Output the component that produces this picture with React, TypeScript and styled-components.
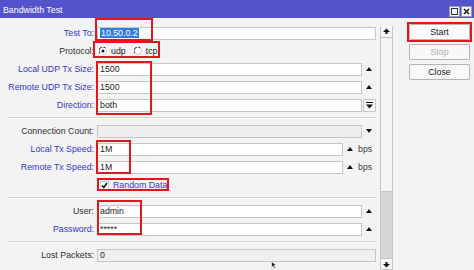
import React from "react";
import styled, { createGlobalStyle } from "styled-components";

const GlobalStyle = createGlobalStyle`
  html, body {
    margin: 0;
    padding: 0;
    background: #f3f3f3;
  }
  body {
    font-family: "Liberation Sans", Arial, sans-serif;
    font-size: 8.8px;
    color: #2a2a2a;
  }
`;

const Window = styled.div`
  position: relative;
  width: 474px;
  height: 270px;
  overflow: hidden;
  display: flex;
  flex-direction: column;
  background: #f3f3f3;
`;

const TitleBar = styled.div`
  height: 18px;
  flex: none;
  display: flex;
  align-items: center;
  justify-content: space-between;
  background: #5353cb;
  color: #fff;
  padding: 0 2px 0 3px;
  box-sizing: border-box;
`;

const Title = styled.span`
  font-size: 8.8px;
  padding-top: 1px;
`;

const TitleButtons = styled.div`
  display: flex;
  gap: 1px;
  align-self: flex-end;
  margin-bottom: 1px;
`;

const TitleButton = styled.div`
  width: 11px;
  height: 11px;
  box-sizing: border-box;
  border: 1px solid #9a9aa8;
  background: #f4f4f4;
  display: flex;
  align-items: center;
  justify-content: center;
`;

const Body = styled.div`
  flex: 1;
  display: flex;
  flex-direction: row;
  min-height: 0;
`;

const FormPane = styled.div`
  width: 380px;
  box-sizing: border-box;
  padding: 6px 4px 0 0;
  display: flex;
  flex-direction: column;
`;

const Row = styled.div`
  height: 18px;
  flex: none;
  display: flex;
  align-items: center;
`;

const Label = styled.div<{ $link?: boolean }>`
  width: 94px;
  padding-right: 3px;
  text-align: right;
  white-space: nowrap;
  color: ${(p) => (p.$link ? "#3535c9" : "#2e2e2e")};
`;

const Field = styled.div<{ $disabled?: boolean }>`
  flex: 1;
  height: 13px;
  box-sizing: border-box;
  border: 1px solid #c6c6c6;
  background: ${(p) => (p.$disabled ? "#efefef" : "#ffffff")};
  display: flex;
  align-items: center;
  padding-left: 2px;
  color: #1c1c1c;
  white-space: nowrap;
`;

const Selected = styled.span`
  background: #2f7fe0;
  color: #fff;
  padding: 0 1px;
  line-height: 10px;
`;

const SpinCell = styled.div`
  width: 14px;
  flex: none;
  display: flex;
  align-items: center;
  justify-content: center;
`;

const UpTri = styled.span`
  width: 0;
  height: 0;
  border-left: 3.5px solid transparent;
  border-right: 3.5px solid transparent;
  border-bottom: 4px solid #111;
`;

const DownTri = styled.span`
  width: 0;
  height: 0;
  border-left: 3.5px solid transparent;
  border-right: 3.5px solid transparent;
  border-top: 4px solid #111;
`;

const DropButton = styled.div`
  width: 13px;
  height: 13px;
  margin-left: 1px;
  box-sizing: border-box;
  border: 1px solid #c6c6c6;
  background: #f7f7f7;
  display: flex;
  align-items: center;
  justify-content: center;
`;

const Unit = styled.span`
  width: 18px;
  flex: none;
  padding-left: 1px;
  color: #3a3a3a;
`;

const RadioGroup = styled.div`
  display: flex;
  align-items: center;
  padding-left: 2px;
  gap: 3px;
`;

const Option = styled.span`
  display: flex;
  align-items: center;
  gap: 4px;
  margin-right: 5px;
  color: #1c1c1c;
`;

const CheckLabel = styled.span`
  display: flex;
  align-items: center;
  gap: 4px;
  padding-left: 3px;
  color: #3535c9;
`;

const Separator = styled.div`
  flex: none;
  height: 1px;
  margin: 3px 0 3px 8px;
  background: #d3d3d3;
  border-bottom: 1px solid #fbfbfb;
`;

const Scrollbar = styled.div`
  width: 13px;
  flex: none;
  margin-top: 8px;
  box-sizing: border-box;
  border-left: 1px solid #c4c4c4;
  border-right: 1px solid #c4c4c4;
  background: #f4f4f4;
  display: flex;
  flex-direction: column;
`;

const ScrollButton = styled.div<{ $top?: boolean }>`
  height: 12px;
  flex: none;
  display: flex;
  align-items: center;
  justify-content: center;
  border-top: ${(p) => (p.$top ? "none" : "1px solid #c4c4c4")};
  border-bottom: 1px solid #c4c4c4;
  box-sizing: border-box;
  background: #f7f7f7;
`;

const Track = styled.div`
  flex: 1;
  display: flex;
  flex-direction: column;
  justify-content: flex-end;
`;

const Thumb = styled.div`
  height: 66px;
  background: #d6d6d6;
  border-top: 1px solid #c4c4c4;
`;

const ButtonPane = styled.div`
  flex: 1;
  display: flex;
  flex-direction: column;
  align-items: flex-end;
  padding: 6px 4px 0 0;
  gap: 4px;
`;

const Button = styled.div<{ $disabled?: boolean }>`
  width: 61px;
  height: 16px;
  box-sizing: border-box;
  border: 1px solid #b4b4b4;
  border-radius: 1px;
  background: #f8f8f8;
  display: flex;
  align-items: center;
  justify-content: center;
  color: ${(p) => (p.$disabled ? "#b0b0b0" : "#222")};
`;

const Mark = styled.div`
  position: absolute;
  box-sizing: border-box;
  border: 2px solid #e3161d;
  pointer-events: none;
`;

const Cursor = styled.svg`
  position: absolute;
  left: 271px;
  top: 261px;
`;

const Radio: React.FC<{ on?: boolean }> = ({ on }) => (
  <svg width="8" height="8" viewBox="0 0 8 8">
    <circle cx="4" cy="4" r="3.5" fill="#fff" />
    <path d="M1 6.5 A3.5 3.5 0 0 1 6.5 1" stroke="#333" strokeWidth="1" fill="none" />
    <path d="M6.5 1.5 A3.5 3.5 0 0 1 1.5 6.5" stroke="#d0d0d0" strokeWidth="1" fill="none" />
    {on && <circle cx="4" cy="4" r="1.5" fill="#111" />}
  </svg>
);

const Check: React.FC = () => (
  <svg width="9" height="9" viewBox="0 0 9 9">
    <rect x="0.5" y="0.5" width="8" height="8" fill="#fff" stroke="#cfcfcf" />
    <path d="M2 4.5 L3.8 6.5 L7 2" stroke="#111" strokeWidth="1.6" fill="none" />
  </svg>
);

const SpinUp: React.FC = () => (
  <SpinCell>
    <UpTri />
  </SpinCell>
);

type FieldRowProps = {
  label: string;
  link?: boolean;
  value?: React.ReactNode;
  disabled?: boolean;
  trail?: React.ReactNode;
};

const FieldRow: React.FC<FieldRowProps> = ({ label, link, value, disabled, trail }) => (
  <Row>
    <Label $link={link}>{label}</Label>
    <Field $disabled={disabled}>{value}</Field>
    {trail}
  </Row>
);

const BpsTrail = (
  <>
    <SpinUp />
    <Unit>bps</Unit>
  </>
);

export default function App() {
  return (
    <>
      <GlobalStyle />
      <Window>
        <TitleBar>
          <Title>Bandwidth Test</Title>
          <TitleButtons>
            <TitleButton>
              <svg width="7" height="7" viewBox="0 0 7 7">
                <rect x="0.5" y="0.5" width="6" height="6" fill="none" stroke="#333" />
              </svg>
            </TitleButton>
            <TitleButton>
              <svg width="7" height="7" viewBox="0 0 7 7">
                <path d="M1 1 L6 6 M6 1 L1 6" stroke="#222" strokeWidth="1.6" />
              </svg>
            </TitleButton>
          </TitleButtons>
        </TitleBar>
        <Body>
          <FormPane>
            <FieldRow label="Test To:" link value={<Selected>10.50.0.2</Selected>} />
            <Row>
              <Label>Protocol:</Label>
              <RadioGroup>
                <Option>
                  <Radio on />
                  udp
                </Option>
                <Option>
                  <Radio />
                  tcp
                </Option>
              </RadioGroup>
            </Row>
            <FieldRow label="Local UDP Tx Size:" link value="1500" trail={<SpinUp />} />
            <FieldRow label="Remote UDP Tx Size:" link value="1500" trail={<SpinUp />} />
            <FieldRow
              label="Direction:"
              link
              value="both"
              trail={
                <DropButton>
                  <svg width="7" height="7" viewBox="0 0 7 7">
                    <rect x="0" y="0" width="7" height="1" fill="#111" />
                    <path d="M0 2.5 H7 L3.5 6.5 Z" fill="#111" />
                  </svg>
                </DropButton>
              }
            />
            <Separator />
            <FieldRow
              label="Connection Count:"
              disabled
              trail={
                <SpinCell>
                  <DownTri />
                </SpinCell>
              }
            />
            <FieldRow label="Local Tx Speed:" link value="1M" trail={BpsTrail} />
            <FieldRow label="Remote Tx Speed:" link value="1M" trail={BpsTrail} />
            <Row>
              <Label />
              <CheckLabel>
                <Check />
                Random Data
              </CheckLabel>
            </Row>
            <Separator />
            <FieldRow label="User:" value="admin" trail={<SpinUp />} />
            <FieldRow label="Password:" link value="*****" trail={<SpinUp />} />
            <Separator />
            <FieldRow label="Lost Packets:" value="0" disabled />
          </FormPane>
          <Scrollbar>
            <ScrollButton $top>
              <svg width="7" height="7" viewBox="0 0 7 7">
                <path d="M3.5 0.5 L7 4 H0 Z" fill="#111" />
                <rect x="2.5" y="4" width="2" height="2" fill="#111" />
              </svg>
            </ScrollButton>
            <Track>
              <Thumb />
            </Track>
            <ScrollButton>
              <svg width="7" height="7" viewBox="0 0 7 7">
                <rect x="2.5" y="1" width="2" height="2" fill="#111" />
                <path d="M0 3 H7 L3.5 6.5 Z" fill="#111" />
              </svg>
            </ScrollButton>
          </Scrollbar>
          <ButtonPane>
            <Button>Start</Button>
            <Button $disabled>Stop</Button>
            <Button>Close</Button>
          </ButtonPane>
        </Body>

        <Mark style={{ left: 95, top: 18, width: 58, height: 23 }} />
        <Mark style={{ left: 93, top: 41, width: 67, height: 17 }} />
        <Mark style={{ left: 96, top: 61, width: 56, height: 54 }} />
        <Mark style={{ left: 96, top: 140, width: 35, height: 34 }} />
        <Mark style={{ left: 97, top: 178, width: 72, height: 13 }} />
        <Mark style={{ left: 97, top: 200, width: 45, height: 35 }} />
        <Mark style={{ left: 407, top: 22, width: 65, height: 20 }} />

        <Cursor width="6" height="8" viewBox="0 0 6 8">
          <path d="M0.5 0.5 L0.5 6.5 L2 5 L3.5 7.5 L4.5 7 L3.2 4.5 L5.5 4.5 Z" fill="#222" stroke="#fff" strokeWidth="0.6" />
        </Cursor>
      </Window>
    </>
  );
}
